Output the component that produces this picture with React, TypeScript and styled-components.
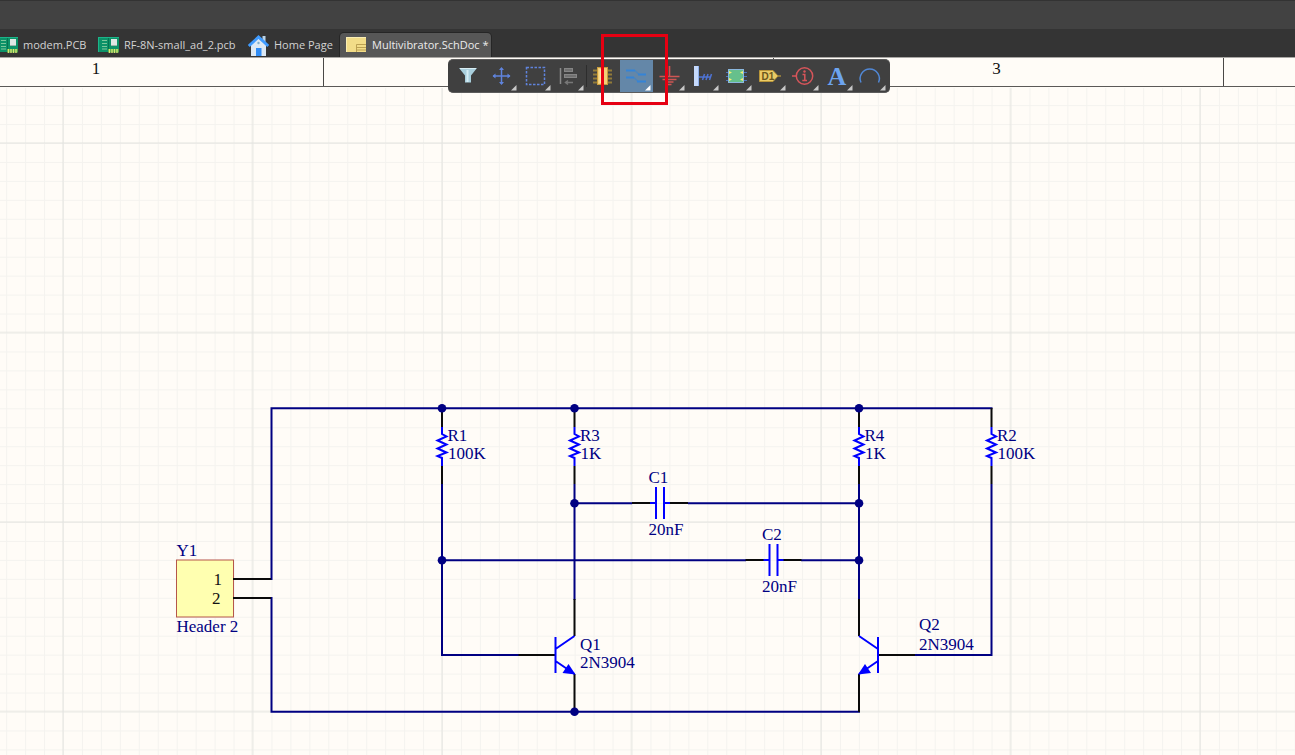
import React from "react";
import styled, { createGlobalStyle, css } from "styled-components";

const GlobalStyle = createGlobalStyle`
  *, *::before, *::after { box-sizing: border-box; }
  body { margin: 0; background: #fffcf7; }
`;

const App = styled.div`
  display: flex;
  flex-direction: column;
  min-height: 100vh;
  overflow: hidden;
`;

const TitleBar = styled.header`
  height: 29px;
  background: #424242;
  border-top: 1px solid #333333;
`;

const TabStrip = styled.div`
  background: #343434;
`;

const TabBar = styled.nav`
  display: flex;
  align-items: flex-end;
  height: 28px;
  padding-top: 4px;
  margin-left: -9px;
`;

const Tab = styled.button<{ $width: number; $active?: boolean }>`
  display: flex;
  align-items: center;
  flex: none;
  gap: 5px;
  width: ${(p) => p.$width}px;
  height: 24px;
  padding: 0 6px;
  border: 0;
  background: transparent;
  color: #d2d2d2;
  font: 11px/16px "Open Sans", "Noto Sans", sans-serif;
  white-space: nowrap;
  ${(p) =>
    p.$active &&
    css`
      background: #575757;
      color: #ececec;
      border-radius: 4px 4px 0 0;
      box-shadow: 0 0 0 1px #262626;
    `}
`;

const TabIcon = styled.svg`
  flex: none;
  width: 21px;
  height: 22px;
`;

const Sheet = styled.main`
  position: relative;
  display: flex;
  flex-direction: column;
  flex: 1;
  background: #fffcf7;
`;

const Ruler = styled.div`
  display: flex;
  height: 30px;
  margin-left: -127px;
  border-top: 1px solid #a9a7a4;
  border-bottom: 1px solid #5b5957;
`;

const Zone = styled.div`
  flex: none;
  width: 450px;
  border-right: 1px solid #4a4846;
  padding-right: 4px;
  text-align: center;
  font: 17px/21px "Liberation Serif", serif;
  color: #111111;

  &:first-child { width: 451px; }
`;

const Drawing = styled.svg`
  display: block;
  flex: 1;
  width: 100%;
  min-height: 640px;
  font: 17px "Liberation Serif", serif;
`;

const ToolBar = styled.div`
  position: absolute;
  top: 2px;
  left: 448px;
  display: grid;
  grid-template-columns: repeat(13, 1fr);
  width: 442px;
  height: 34px;
  padding: 0 2px 0 4px;
  border: solid #5c5c5c;
  border-width: 1px 0;
  border-radius: 5px;
  background: #404040;
`;

const Tool = styled.button<{ $active?: boolean }>`
  position: relative;
  display: flex;
  align-items: center;
  justify-content: center;
  min-width: 0;
  padding: 0;
  border: 0;
  background: ${(p) => (p.$active ? "#6487a8" : "transparent")};
`;

const ToolIcon = styled.svg`
  flex: none;
  width: 34px;
  height: 32px;
`;

const Callout = styled.span`
  position: absolute;
  z-index: 1;
  top: -26px;
  left: -19px;
  width: 67px;
  height: 71px;
  border: 3px solid #e60012;
  pointer-events: none;
`;

const PcbIcon = () => (
  <TabIcon viewBox="0 0 21 22" aria-hidden="true">
    <rect x="0" y="3" width="21" height="15" fill="#0c9268" />
    <path d="M0 3.5H21M.5 3V18" stroke="#1bb58a" />
    <path d="M4 6.5H9M4 9.5H9M4 12.5H9M4 15H9" stroke="#7cc79a" />
    <path d="M10.500 4V17" stroke="#077350" />
    <rect x="13" y="5" width="6" height="6" fill="#dfe6e3" />
    <path d="M13 11.500H19" stroke="#9db5ab" />
    <rect x="10" y="15" width="11" height="3.500" fill="#4aa34c" />
    <path d="M11.500 15V19M14 15V19M16.500 15V19M19 15V19" stroke="#d6e773" strokeWidth="1.400" />
  </TabIcon>
);

const HomeIcon = () => (
  <TabIcon viewBox="0 0 21 22" aria-hidden="true">
    <rect x="14.500" y="2" width="3" height="7" fill="#b9d3e8" />
    <path d="M3 11L10.500 4L18 11V22H3Z" fill="#dce8f3" />
    <rect x="8" y="14" width="5.500" height="8" fill="#2f8cf5" />
    <circle cx="10.500" cy="9" r="1.200" fill="#7cafcd" />
    <path d="M.8 12L10.500 3L20.200 12" fill="none" stroke="#3f9bff" strokeWidth="2.800" />
  </TabIcon>
);

const SheetIcon = () => (
  <TabIcon viewBox="0 0 21 22" aria-hidden="true">
    <rect x="0" y="3" width="20" height="15" fill="#f2dc88" />
    <path d="M0 3.500H20M.5 3V18" stroke="#faeeb4" />
    <path d="M10.500 18V10.500H20M10.500 13.500H20M10.500 16H20" fill="none" stroke="#b59a4c" strokeWidth=".9" />
  </TabIcon>
);

const tabs = [
  { label: "modem.PCB", width: 101, icon: <PcbIcon /> },
  { label: "RF-8N-small_ad_2.pcb", width: 150, icon: <PcbIcon /> },
  { label: "Home Page", width: 98, icon: <HomeIcon /> },
  { label: "Multivibrator.SchDoc *", width: 151, icon: <SheetIcon />, active: true },
];

type ToolItem = { name: string; menu?: boolean; active?: boolean; art: React.ReactNode };

const tools: ToolItem[] = [
  {
    name: "Filter",
    art: (
      <>
        <path d="M7 9H25L19 16.500V23.500H13V16.500Z" fill="#a9cfdd" />
        <path d="M8 9.500H24" stroke="#d9eef4" />
        <path d="M15.500 11V23" stroke="#d5edf4" strokeWidth="2" />
      </>
    ),
  },
  {
    name: "Move",
    menu: true,
    art: (
      <>
        <path d="M16.500 9V25M8 17H25" stroke="#5f83dc" strokeWidth="1.500" />
        <path d="M16.500 8L19 11H14ZM16.500 26L19 23H14ZM7.500 17L10.500 14.500V19.500ZM25.500 17L22.500 14.500V19.500Z" fill="#5f83dc" />
      </>
    ),
  },
  {
    name: "Select",
    menu: true,
    art: <rect x="7.500" y="8.500" width="18" height="17" fill="none" stroke="#5f83dc" strokeWidth="1.500" strokeDasharray="2.500 1.500" />,
  },
  {
    name: "Align",
    menu: true,
    art: (
      <>
        <path d="M8.500 9V25" stroke="#8a8a8a" strokeWidth="1.500" />
        <rect x="12.500" y="9.500" width="8" height="3" fill="#707070" stroke="#858585" />
        <rect x="12.500" y="15.500" width="12" height="3" fill="#707070" stroke="#858585" />
        <path d="M13 23.500H21M16 21.500L13.500 23.500L16 25.500" fill="none" stroke="#777777" strokeWidth="1.500" />
      </>
    ),
  },
  {
    name: "Place part",
    art: (
      <>
        <path d="M.5 6V28" stroke="#2d2d2d" />
        <path d="M7 11.500H26M7 15.500H26M7 19.500H26M7 23.500H26" stroke="#927b38" strokeWidth="2" />
        <rect x="11.500" y="8.500" width="10" height="17" fill="#f2cf77" stroke="#c99d3c" />
        <path d="M14.500 10V24" stroke="#fbe6ad" strokeWidth="2" />
      </>
    ),
  },
  {
    name: "Place wire",
    menu: true,
    active: true,
    art: (
      <>
        <path d="M16 11.500L20 15.500M15 18.500L19 22.500" stroke="#4a85bf" strokeWidth="1.200" />
        <path d="M7 11.500H16M19 15.500H27M7 18.500H15M18 22.500H27" stroke="#3584d6" strokeWidth="2" />
      </>
    ),
  },
  {
    name: "Power port",
    menu: true,
    art: <path d="M16.500 7V17M6.500 17.500H26.500M9.500 20.500H23.500M12.500 23H20.500M14.500 25.500H18.500" stroke="#cf5653" strokeWidth="1.600" />,
  },
  {
    name: "Place bus",
    menu: true,
    art: (
      <>
        <rect x="7" y="7" width="5" height="20" fill="#c5d9fb" />
        <path d="M11.500 7V27" stroke="#8db0ec" />
        <path d="M12 18H24M15.500 21L17.500 15M19 21L21 15M22.500 21L24.500 15" stroke="#4e73d4" strokeWidth="1.500" />
      </>
    ),
  },
  {
    name: "Sheet symbol",
    menu: true,
    art: (
      <>
        <path d="M6 13.500H27M6 17.500H27M6 21.500H27" stroke="#4c75bd" strokeWidth="1.200" />
        <rect x="8.500" y="10.500" width="15" height="13" fill="#66c08c" stroke="#8bb8df" />
        <path d="M9 12L12 13.500L9 15ZM9 19L12 20.500L9 22ZM23 12L20 13.500L23 15ZM23 19L20 20.500L23 22Z" fill="#f5ef72" />
      </>
    ),
  },
  {
    name: "Port",
    menu: true,
    art: (
      <>
        <path d="M23 17H27" stroke="#a58a3d" strokeWidth="1.500" />
        <path d="M5.500 11.500H19L24 17L19 22.500H5.500Z" fill="#eacb66" stroke="#b99639" />
        <text x="7.500" y="21" fontFamily="Liberation Sans, sans-serif" fontWeight="bold" fontSize="10" fill="#6a561c">D1</text>
      </>
    ),
  },
  {
    name: "Directive",
    menu: true,
    art: (
      <>
        <path d="M5 17H9" stroke="#d6555a" strokeWidth="1.500" />
        <circle cx="17.500" cy="17" r="8.200" fill="none" stroke="#d6555a" strokeWidth="1.500" />
        <circle cx="17.500" cy="12.500" r="1.200" fill="#d6555a" />
        <path d="M15.500 15.500H17.800V21M15.300 21.500H20" fill="none" stroke="#d6555a" strokeWidth="1.500" />
      </>
    ),
  },
  {
    name: "Text",
    menu: true,
    art: (
      <text x="16" y="26" textAnchor="middle" fontFamily="Liberation Serif, serif" fontWeight="bold" fontSize="26" fill="#6da4ef">A</text>
    ),
  },
  {
    name: "Arc",
    menu: true,
    art: <path d="M7 23.500A9.600 9.600 0 1 1 24.500 23.500" fill="none" stroke="#5188d6" strokeWidth="1.500" />,
  },
];

const WIRE = "#000082";
const BODY = "#0000ff";
const PIN = "#0a0a0a";

const Resistor = ({ x, name, value }: { x: number; name: string; value: string }) => (
  <g transform={`translate(${x} 408)`}>
    <path d="M0 0V19M0 58V76" fill="none" stroke={PIN} />
    <path d="M0 19V26L4.500 28.500L-4.500 32.500L4.500 36.500L-4.500 40.500L4.500 44.500L-4.500 48L0 50V58" fill="none" stroke={BODY} />
    <text x="5.500" y="33">{name}</text>
    <text x="6" y="51">{value}</text>
  </g>
);

const Capacitor = ({ x, y, name, value }: { x: number; y: number; name: string; value: string }) => (
  <g transform={`translate(${x} ${y})`}>
    <path d="M-28 0H-9M9 0H28" stroke={PIN} />
    <path d="M-10 0H-4M4 0H10M-4 -16V16M4 -16V16" stroke={BODY} />
    <text x="-11.500" y="-20">{name}</text>
    <text x="-11.500" y="32">{value}</text>
  </g>
);

const Transistor = ({ x, flip }: { x: number; flip?: boolean }) => (
  <g transform={`translate(${x} 655)${flip ? " scale(-1 1)" : ""}`}>
    <path d="M0 -56V-19M0 19V57M-56 0H-19" stroke={PIN} />
    <path d="M-19 -18V18M-19 -6L0 -19M-19 6L0 19" stroke={BODY} />
    <path d="M1 19.500L-12 18L-6 9Z" fill={BODY} />
  </g>
);

const Header = () => (
  <g>
    <rect x="176.500" y="560" width="57" height="57" fill="#ffffb0" stroke="#b5574a" strokeWidth="1" />
    <path d="M233 579H271M233 598H271" stroke={PIN} />
    <text x="176.500" y="556">Y1</text>
    <text x="176.500" y="632">Header 2</text>
    <text x="213.500" y="585" fill="#111111">1</text>
    <text x="212" y="604" fill="#111111">2</text>
  </g>
);

const junctions = [
  [442, 408], [574.5, 408], [859, 408], [574.5, 503], [859, 503],
  [442, 560], [859, 560], [574.5, 711.5],
];

const Schematic = () => (
  <Drawing role="img" aria-label="Multivibrator schematic">
    <defs>
      <pattern id="minor" x="63" y="56" width="18.950" height="18.950" patternUnits="userSpaceOnUse">
        <path d="M.5 0V18.950M0 .5H18.950" stroke="#f4f3ef" />
      </pattern>
      <pattern id="major" x="62" y="55" width="189.500" height="189.500" patternUnits="userSpaceOnUse">
        <path d="M1 0V189.500M0 1H189.500" stroke="#e4e4e0" />
      </pattern>
    </defs>
    <rect y="1" width="100%" height="100%" fill="url(#minor)" />
    <rect y="1" width="100%" height="100%" fill="url(#major)" />
    <g transform="translate(0 -87)" strokeWidth="2">
      <g stroke={WIRE} fill="none">
        <path d="M270.500 579H271.500V408.300H992.500" />
        <path d="M270.500 598H271.500V711.800H860" />
        <path d="M442 484V655H519M574.500 484V600M859 484V600M991.500 484V655H914" />
        <path d="M574.500 503.200H632M688 503.200H859M442 560.200H746M801 560.200H859" />
      </g>
      <g fill={WIRE}>
        <Header />
        <Resistor x={442} name="R1" value="100K" />
        <Resistor x={574.5} name="R3" value="1K" />
        <Resistor x={859} name="R4" value="1K" />
        <Resistor x={991.5} name="R2" value="100K" />
        <Capacitor x={660} y={503} name="C1" value="20nF" />
        <Capacitor x={773.5} y={560} name="C2" value="20nF" />
        <Transistor x={574.5} />
        <Transistor x={859} flip />
        <text x="580" y="650">Q1</text>
        <text x="580" y="668">2N3904</text>
        <text x="919" y="630">Q2</text>
        <text x="919" y="650">2N3904</text>
        {junctions.map(([x, y]) => (
          <circle key={`${x}-${y}`} cx={x} cy={y + 0.3} r="4.300" />
        ))}
      </g>
    </g>
  </Drawing>
);

export default function Editor() {
  return (
    <App>
      <GlobalStyle />
      <TitleBar />
      <TabStrip>
        <TabBar aria-label="Open documents">
          {tabs.map((t) => (
            <Tab key={t.label} $width={t.width} $active={t.active}>
              {t.icon}
              <span>{t.label}</span>
            </Tab>
          ))}
        </TabBar>
      </TabStrip>
      <Sheet>
        <Ruler>
          {[1, 2, 3].map((n) => (
            <Zone key={n}>{n}</Zone>
          ))}
        </Ruler>
        <Schematic />
        <ToolBar role="toolbar" aria-label="Placement tools">
          {tools.map((t) => (
            <Tool key={t.name} aria-label={t.name} $active={t.active}>
              <ToolIcon viewBox="0 1 34 32" aria-hidden="true">
                {t.art}
                {t.menu && <path d="M31.500 26V31.500H26Z" fill={t.active ? "#ffffff" : "#c8c8c8"} />}
              </ToolIcon>
              {t.active && <Callout />}
            </Tool>
          ))}
        </ToolBar>
      </Sheet>
    </App>
  );
}
